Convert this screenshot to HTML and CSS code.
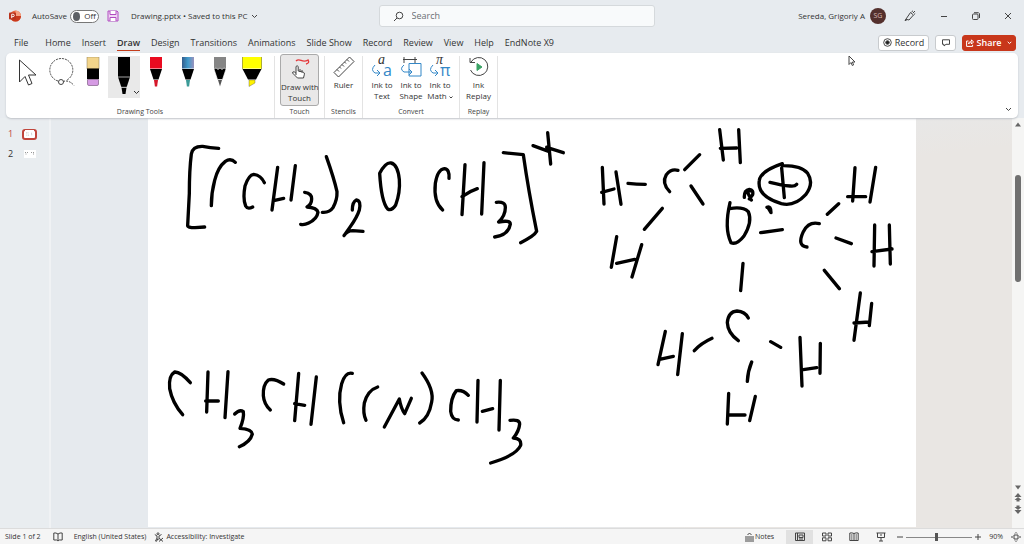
FILE: index.html
```html
<!DOCTYPE html>
<html lang="en">
<head>
  <meta charset="UTF-8">
  <meta name="viewport" content="width=device-width, initial-scale=1">
  <title>Drawing.pptx - PowerPoint</title>
  <link rel="stylesheet" href="styles.css">
</head>
<body>

  <!-- Title bar -->
  <header class="titlebar">
    <div class="title-left">
      <svg class="app-logo" width="12" height="12" viewBox="0 0 12 12">
        <circle cx="6.5" cy="6" r="5.5" fill="#e8663f"/>
        <path d="M6.5 .5a5.5 5.5 0 0 1 5.5 5.5H6.5z" fill="#f4a080"/>
        <path d="M1 6a5.5 5.5 0 0 0 11 0z" fill="#c9391c"/>
        <rect x="0" y="2.500" width="7" height="7" rx="1" fill="#b9311a"/>
        <path d="M2.700 8.200V4.200H4a1.200 1.200 0 0 1 0 2.500H2.700" fill="none" stroke="#fff" stroke-width=".9"/>
      </svg>
      <label class="autosave">AutoSave
        <span class="switch"><input type="checkbox"><span class="state">Off</span></span>
      </label>
      <button class="icon-btn save" aria-label="Save">
        <svg width="12" height="12" viewBox="0 0 12 12">
          <path d="M1 1h9l1 1v9H1z"/><path d="M3 1v3.500h6V1M3 11V7.500h6V11" fill="#fff"/>
        </svg>
      </button>
      <button class="doc-name">Drawing.pptx • Saved to this PC
        <svg width="7" height="5" viewBox="0 0 7 5"><path d="M1 1l2.500 2.500L6 1"/></svg>
      </button>
    </div>
    <label class="search">
      <svg width="11" height="11" viewBox="0 0 11 11"><circle cx="6.500" cy="4.500" r="3.300"/><path d="M4 7L1 10"/></svg>
      <input type="search" placeholder="Search" aria-label="Search">
    </label>
    <div class="title-right">
      <span class="user">Sereda, Grigoriy A</span>
      <span class="avatar">SG</span>
      <button class="icon-btn" aria-label="Coming soon">
        <svg width="12" height="12" viewBox="0 0 12 12"><path d="M1 10.500L6.500 2.500l3 2.500L5 10l-2-.5zM3 9.500l-2 1M7.500 2L9 .8M10 4.500l1.200-1M9 3l2-2"/></svg>
      </button>
      <button class="icon-btn" aria-label="Minimize">
        <svg width="8" height="8" viewBox="0 0 8 8"><path d="M1 4.500h6"/></svg>
      </button>
      <button class="icon-btn" aria-label="Restore">
        <svg width="8" height="8" viewBox="0 0 8 8"><rect x=".5" y="2" width="5.500" height="5.500" rx="1"/><path d="M2 .7h4.500l1 1V6"/></svg>
      </button>
      <button class="icon-btn" aria-label="Close">
        <svg width="8" height="8" viewBox="0 0 8 8"><path d="M1 1l6 6M7 1L1 7"/></svg>
      </button>
    </div>
  </header>

  <!-- Ribbon tabs -->
  <nav class="tabs">
    <a href="#" class="file">File</a>
    <a href="#">Home</a>
    <a href="#">Insert</a>
    <a href="#" class="active">Draw</a>
    <a href="#">Design</a>
    <a href="#">Transitions</a>
    <a href="#">Animations</a>
    <a href="#">Slide Show</a>
    <a href="#">Record</a>
    <a href="#">Review</a>
    <a href="#">View</a>
    <a href="#">Help</a>
    <a href="#">EndNote X9</a>
    <div class="tab-actions">
      <button class="record">
        <svg width="9" height="9" viewBox="0 0 9 9"><circle cx="4.500" cy="4.500" r="3.800" fill="none" stroke="#222" stroke-width=".8"/><circle cx="4.500" cy="4.500" r="1.800" fill="#222"/></svg>
        Record
      </button>
      <button class="comments" aria-label="Comments">
        <svg width="8" height="8" viewBox="0 0 8 8"><path d="M.5 .8h7v4.500H4L2 7V5.300H.5z"/></svg>
      </button>
      <button class="share">
        <svg width="8" height="8" viewBox="0 0 8 8"><path d="M2.500 2H.6v5.400h6V5.800M2.500 5c.3-2 1.500-2.700 3-2.700V.8l2 2.200-2 2V3.600c-1.500 0-2.300.4-3 1.400z"/></svg>
        Share
        <svg class="caret" width="5" height="4" viewBox="0 0 5 4"><path d="M.7 .8l1.800 1.800L4.300 .8"/></svg>
      </button>
    </div>
  </nav>

  <!-- Ribbon -->
  <section class="ribbon">
    <div class="group tools">
      <div class="group-body">
        <button class="tool" aria-label="Select">
          <svg width="20" height="30" viewBox="0 0 20 30"><path d="M1.500 3v22l5.500-5.500 3.500 8.500 3.500-1.500-3.500-8.500h7.500z"/></svg>
        </button>
        <button class="tool" aria-label="Lasso select">
          <svg width="30" height="30" viewBox="0 0 30 30"><path d="M15 24.500A11.500 11.500 0 1 1 21 23M17 24.500q6-2 11 4" stroke-dasharray="2 1"/><circle cx="15" cy="25" r="2.500" fill="#fff"/></svg>
        </button>
        <button class="tool" aria-label="Eraser">
          <svg width="20" height="40" viewBox="0 0 20 40"><path d="M4 0h12v12H4z" fill="#f3d58b" stroke="#8b7b54" stroke-width=".5"/><path d="M4 11.500h12V22H4z"/><path d="M4.500 22.500h11V27q0 1.500-1.500 1.500H6Q4.500 28.500 4.500 27z" fill="#d59ae3" stroke="#6d4b76" stroke-width=".6"/></svg>
        </button>
        <button class="tool selected" aria-label="Pen: Black">
          <svg width="20" height="40" viewBox="0 0 20 40"><path d="M4 0h12v20H4z"/><path d="M4 20h12l-3.300 10H7.300z"/><path d="M7.500 30.500h5l-1 6.500h-3z"/><path d="M4 20h12M7 30.300h6" stroke="#ccc" stroke-width=".8"/></svg>
          <svg class="more" width="7" height="5" viewBox="0 0 7 5"><path d="M1 1l2.500 2.500L6 1"/></svg>
        </button>
        <button class="tool" aria-label="Pen: Red">
          <svg width="20" height="40" viewBox="0 0 20 40"><path d="M4 0h12v11.500H4z" fill="#ea0b20"/><path d="M4 12h12l-3.500 10.500h-5z"/><path d="M8 23h4l-.9 6.500H8.900z" fill="#d5182b"/></svg>
        </button>
        <button class="tool" aria-label="Pen: Galaxy">
          <svg width="20" height="40" viewBox="0 0 20 40">
            <defs><linearGradient id="galaxy"><stop offset="0" stop-color="#335c8c"/><stop offset=".5" stop-color="#3f9acb"/><stop offset="1" stop-color="#9a93bd"/></linearGradient></defs>
            <path d="M4 0h12v11.500H4z" fill="url(#galaxy)"/><path d="M4 12h12l-3.500 10.500h-5z"/><path d="M8 23h4l-.9 6.500H8.900z" fill="#3c9b98"/>
          </svg>
        </button>
        <button class="tool" aria-label="Pencil">
          <svg width="20" height="40" viewBox="0 0 20 40"><path d="M4 0h12v13H4z" fill="#858585"/><path d="M4 12l2-1 2 1.500L10 11l2 1.500L14 11l2 1-3.500 10.500h-5z" stroke="#fff" stroke-width=".6"/><path d="M8 23h4l-2 6.500z" fill="#555"/></svg>
        </button>
        <button class="tool" aria-label="Highlighter">
          <svg width="20" height="40" viewBox="0 0 20 40"><path d="M.5 0h19v11.500H.5z" fill="#ff0"/><path d="M.5 12h19L14 22.500H6z"/><path d="M7 23h6v3l-6 3.500z" fill="#fff200" stroke="#555" stroke-width=".4"/><path d="M.5 0v12M19.500 0v12" stroke="#777600" stroke-width=".6"/></svg>
        </button>
      </div>
      <div class="group-label">Drawing Tools</div>
    </div>

    <div class="group touch">
      <div class="group-body">
        <button class="command pressed">
          <svg width="24" height="22" viewBox="0 0 24 22"><path d="M8 3c4-4 6 3 12-1q2 3-2 4" stroke="#e5383b" stroke-width="1.400"/><path d="M8 17V8.500q1.200-1.500 2.200 0V13l5 1.200q1.500.5 1.200 2L15.500 20h-6L4.500 15q0-1.500 1.700-1.200L8 15.200M12 11v3M14 12v2.500" fill="#fff"/></svg>
          Draw with<br>Touch
        </button>
      </div>
      <div class="group-label">Touch</div>
    </div>

    <div class="group stencils">
      <div class="group-body">
        <button class="command">
          <svg width="24" height="22" viewBox="0 0 24 22"><path d="M2 16.500L17.500 1l4.500 4.500L6.500 21zM5 13.500l2 2M7.500 11l1.500 1.500M10 8.500l2 2M12.500 6l1.500 1.500M15 3.500l2 2"/></svg>
          Ruler
        </button>
      </div>
      <div class="group-label">Stencils</div>
    </div>

    <div class="group convert">
      <div class="group-body">
        <button class="command">
          <svg width="24" height="22" viewBox="0 0 24 22"><text x="8" y="8" class="ink">a</text><path class="blue" d="M5 9q-5 5 0 8h5M7 14l3 3-3 3"/><text x="13" y="20" class="typed">a</text></svg>
          Ink to<br>Text
        </button>
        <button class="command">
          <svg width="24" height="22" viewBox="0 0 24 22"><path d="M4 3.500h14M5 1v6M16 1v6"/><path class="blue" d="M10 7.500h12V20H10zM5 9q-5 4 0 7h8M10 13l3 3-3 3"/></svg>
          Ink to<br>Shape
        </button>
        <button class="command">
          <svg width="24" height="22" viewBox="0 0 24 22"><text x="8" y="8" class="ink">π</text><path class="blue" d="M5 9q-5 5 0 8h5M7 14l3 3-3 3"/><text x="12" y="20" class="typed">π</text></svg>
          Ink to<br>Math <svg class="small-caret" width="4" height="3" viewBox="0 0 4 3"><path d="M.5 .5L2 2 3.500 .5"/></svg>
        </button>
      </div>
      <div class="group-label">Convert</div>
    </div>

    <div class="group replay">
      <div class="group-body">
        <button class="command">
          <svg width="24" height="22" viewBox="0 0 24 22"><path d="M4 6A9 9 0 1 1 3.500 14M3 2v4.500h5"/><path d="M10 7.500l5 3.500-5 3.500z" fill="#3aa365" stroke="#3aa365"/></svg>
          Ink<br>Replay
        </button>
      </div>
      <div class="group-label">Replay</div>
    </div>

    <button class="collapse" aria-label="Ribbon display options">
      <svg width="7" height="5" viewBox="0 0 7 5"><path d="M1 1l2.500 2.500L6 1"/></svg>
    </button>
    <svg class="pointer" width="8" height="12" viewBox="0 0 8 12"><path d="M1 1v8.500l2-2 1.300 3 1.300-.6-1.200-2.900H7z" fill="#fff"/></svg>
  </section>

  <!-- Thumbnails, slide, scroll bar -->
  <main class="workspace">
    <ol class="thumbs">
      <li class="current"><span>1</span><i class="thumb"><svg width="12" height="8" viewBox="0 0 12 8"><path d="M1.500 2.500h4M2 5.500h4M8 3h2M8.500 5h1.500"/></svg></i></li>
      <li><span>2</span><i class="thumb"><svg width="12" height="8" viewBox="0 0 12 8"><path d="M1 2.500h4M7 2.500h3M1.500 4h1M9 4h1"/></svg></i></li>
    </ol>
    <div class="stage">
      <!-- Pen strokes, grouped by where they were made on the slide -->
      <svg class="slide" viewBox="148 118 768 409" role="img" aria-label="Ink drawing of chemical formulas">
        <g transform="translate(160 120) scale(.33333)">
          <path d="M176 85Q150 83 128 79Q98 78 94 102Q88 150 88 220L83 316Q82 323 105 323L134 321"/>
          <path d="M226 127Q212 113 196 124Q174 141 164 181Q154 218 154 257"/>
          <path d="M313 188Q303 166 281 163Q266 165 255 198Q248 237 257 258Q263 269 278 261"/>
          <path d="M353 142L336 270M341 242L371 235M406 137L393 240"/>
          <path d="M434 217Q456 220 455 237Q455 253 441 261Q471 263 474 277Q471 298 446 309Q432 316 422 313"/>
          <path d="M499 110Q522 175 531 215Q532 240 519 263Q508 279 487 277"/>
          <path d="M577 270Q577 246 589 240Q604 242 598 270Q592 290 571 320L552 347Q560 333 578 332L609 334"/>
        </g>
        <g transform="translate(370 120) scale(.33333)">
          <path d="M29 160Q47 126 63 129Q83 133 88 178Q91 217 77 255Q65 274 53 267Q34 245 29 160"/>
          <path d="M237 175Q239 147 223 146Q203 148 196 190Q190 245 218 270"/>
          <path d="M285 134L276 284M276 230Q298 214 322 206M342 128L335 282"/>
          <path d="M379 247Q407 244 406 263Q406 286 386 306Q421 299 421 313Q416 345 374 351"/>
          <path d="M400 98L460 104Q475 210 500 334Q493 348 452 368"/>
          <path d="M533 38L542 132M489 77L536 94M530 82L580 98"/>
        </g>
        <g transform="translate(590 120) scale(.33333)">
          <path d="M389 29L400 120M391 85L440 84M446 29L451 128"/>
          <path d="M37 142L42 252M35 217L72 207M78 156L93 253"/>
          <path d="M114 190Q140 193 166 193M284 149L329 104M303 198L339 252M217 265L163 328"/>
          <path d="M264 151Q244 145 229 164Q214 190 239 215"/>
          <path d="M80 350L64 442M80 430L134 418M155 374L126 471"/>
          <path d="M420 248Q402 325 423 368Q440 376 462 348Q488 305 475 275Q458 259 419 266"/>
          <path d="M463 232Q462 211 478 208Q491 210 488 224L478 237M466 215L486 212M474 220L484 240M531 262Q543 257 543 278L536 266"/>
          <path d="M577 131Q512 153 508 181Q500 229 574 251Q613 261 647 224Q673 190 653 160Q634 136 577 137M575 144L583 233M540 187Q575 196 600 198Q614 200 620 193"/>
          <path d="M512 338L577 329M712 283L746 251M738 354L784 371M703 451L748 506M459 430L452 512"/>
          <path d="M688 311Q656 303 640 335Q620 378 651 381"/>
          <path d="M795 143L788 243M773 230L827 230M857 142L840 246"/>
          <path d="M854 315L852 438M846 395L906 387M898 315L901 432"/>
        </g>
        <g transform="translate(640 250) scale(.33333)">
          <path d="M325 204Q315 184 291 183Q265 185 262 218Q263 249 295 272"/>
          <path d="M76 244L54 344M59 328L100 319M127 251L113 374"/>
          <path d="M163 302Q183 280 216 265M392 275L422 292M335 336Q323 365 322 394"/>
          <path d="M480 262L486 408M490 359L530 353M541 280L540 370"/>
          <path d="M266 430L262 522M266 495L315 495M346 439L329 512"/>
          <path d="M661 129L642 271M642 219L688 216M695 160L688 227"/>
        </g>
        <g transform="translate(150 350) scale(.33333)">
          <path d="M121 98Q92 65 74 66Q55 77 59 116Q67 159 98 194"/>
          <path d="M174 66L170 186M167 153L205 153M234 65L225 203"/>
          <path d="M254 192Q269 177 280 185Q283 203 270 235Q306 238 307 252Q301 276 268 290"/>
          <path d="M401 102Q373 84 355 90Q338 105 340 137Q342 163 361 180"/>
          <path d="M446 70L434 212M434 161L464 166M499 81L483 223"/>
          <path d="M607 70Q586 65 575 101Q560 155 581 218"/>
          <path d="M683 111Q653 121 643 159Q638 190 648 211M703 231L748 147Q753 175 764 191L784 145"/>
          <path d="M816 69Q853 119 845 156Q837 203 809 219"/>
          <path d="M955 136Q939 119 919 122Q902 143 902 184Q905 209 925 210"/>
          <path d="M984 91L981 216M997 184L1028 176M1051 91L1047 240"/>
          <path d="M1080 211Q1109 207 1109 222Q1107 244 1090 264Q1115 265 1112 286Q1098 317 1022 339"/>
        </g>
      </svg>
    </div>
    <div class="scrollbar">
      <svg width="6" height="5" viewBox="0 0 6 5"><path d="M3 .5L6 4.500H0z"/></svg>
      <div class="track"><div class="thumb-bar"></div></div>
      <svg width="6" height="5" viewBox="0 0 6 5"><path d="M3 4.500L6 .5H0z"/></svg>
      <svg width="8" height="9" viewBox="0 0 8 9"><path d="M4 0l3.500 4h-7zM4 4l3.500 3h-7zM2.500 7h3v1.500h-3z"/></svg>
      <svg width="8" height="9" viewBox="0 0 8 9"><path d="M4 9L.5 5h7zM4 5L.5 2h7zM2.500 .5h3V2h-3z"/></svg>
    </div>
  </main>

  <!-- Status bar -->
  <footer class="status">
    <span class="slide-count">Slide 1 of 2</span>
    <svg width="10" height="10" viewBox="0 0 10 10"><path d="M5 2Q3 .5 .8 1v7h3L5 9l1.200-1h3V1Q7 .5 5 2zM5 2v6"/></svg>
    <button class="language">English (United States)</button>
    <button class="access">
      <svg width="10" height="10" viewBox="0 0 10 10"><circle cx="4" cy="1.800" r="1"/><path d="M.8 2.500L3 4v2L1.500 9l1 .3L4 6.500l1 1.300M7.500 2.500L5 4v2M5 6l4 3.500M9 6L5 9.500"/></svg>
      Accessibility: Investigate
    </button>
    <div class="view-controls">
      <button class="notes"><svg width="11" height="10" viewBox="0 0 11 10"><path d="M3.500 3l2-2 2 2M1 5h9M1 7h9M1 9h9"/></svg>Notes</button>
      <button class="view on" aria-label="Normal"><svg width="10" height="10" viewBox="0 0 10 10"><path d="M.5 1h9v7.500h-9zM2.500 1v7.500M4 3h4v2.500H4zM4 7h4"/></svg></button>
      <button class="view" aria-label="Slide sorter"><svg width="10" height="10" viewBox="0 0 10 10"><path d="M.5 1h3.500v3H.5zM6 1h3.500v3H6zM.5 5.800h3.500v3H.5zM6 5.800h3.500v3H6z"/></svg></button>
      <button class="view" aria-label="Reading view"><svg width="10" height="10" viewBox="0 0 10 10"><path d="M5 1.500Q3 .5 .8 1v7.500h8.400V1Q7 .5 5 1.500zM5 1.500v7M2 3h1.500M2 5h1.500M6.500 3H8M6.500 5H8M2 7h1.500M6.500 7H8"/></svg></button>
      <button class="view" aria-label="Slide show"><svg width="10" height="10" viewBox="0 0 10 10"><path d="M.5 1h9M1.500 1v4.500h7V1M5 5.500V9M3 9h4M4 3h2"/></svg></button>
      <button class="zoom-step" aria-label="Zoom out"><svg width="6" height="6" viewBox="0 0 6 6"><path d="M0 3h6"/></svg></button>
      <input type="range" min="0" max="100" value="45" aria-label="Zoom">
      <button class="zoom-step" aria-label="Zoom in"><svg width="6" height="6" viewBox="0 0 6 6"><path d="M0 3h6M3 0v6"/></svg></button>
      <button class="percent">90%</button>
      <button class="fit" aria-label="Fit slide to window"><svg width="10" height="10" viewBox="0 0 10 10"><path d="M3 3h4v4H3zM4 1.500l1-1 1 1M4 8.500l1 1 1-1M1.500 4l-1 1 1 1M8.500 4l1 1-1 1"/></svg></button>
    </div>
  </footer>

</body>
</html>
```
FILE: styles.css
```css
* { margin:0; padding:0; box-sizing:border-box; }
body {
  display:flex;
  flex-direction:column;
  height:100vh;
  overflow:hidden;
  background:#e7ebef;
  color:#333;
  font:8px/12px "Open Sans","Noto Sans",sans-serif;
}
button, input { font:inherit; color:inherit; background:none; border:none; }
a { color:inherit; text-decoration:none; }
svg { flex:none; fill:none; stroke:#444; stroke-width:1; }

/* Title bar */
.titlebar {
  display:grid;
  grid-template-columns:1fr 276px 1fr;
  align-items:center;
  height:32px;
  padding:0 12px 0 9px;
}
.title-left, .title-right { display:flex; align-items:center; }
.app-logo { stroke:none; margin-right:11px; }
.autosave { display:flex; align-items:center; gap:3px; }
.switch {
  display:flex;
  align-items:center;
  width:29px;
  height:13px;
  padding:0 2px;
  gap:4px;
  border:1px solid #777;
  border-radius:7px;
  background:#fff;
}
.switch input { appearance:none; width:9px; height:9px; border-radius:50%; background:#5d6065; }
.icon-btn { display:flex; }
.save { margin:0 12px 0 8px; }
.save svg { fill:#f0d6f4; stroke:#b04cc0; }
.doc-name { display:flex; align-items:center; gap:3px; white-space:nowrap; }
.search {
  display:flex;
  align-items:center;
  gap:8px;
  height:22px;
  margin-left:6px;
  margin-right:-6px;
  padding:0 13px;
  border:1px solid #d5d9dc;
  border-radius:3px;
  background:#f8fafb;
}
.search input { flex:1; min-width:0; font-size:9px; outline:none; }
.search input::placeholder { color:#6b6f73; }
.title-right { justify-content:flex-end; gap:24px; }
.avatar {
  width:16px;
  height:16px;
  margin:0 -6px 0 -19px;
  border-radius:50%;
  background:#54302d;
  color:#d9b9b4;
  font-size:7px;
  line-height:16px;
  text-align:center;
}

/* Tabs */
.tabs {
  display:flex;
  align-items:center;
  gap:11px;
  height:21px;
  padding:0 8px 0 14px;
  font-size:9px;
  white-space:nowrap;
}
.tabs a { padding-top:1px; line-height:14px; border-bottom:1px solid transparent; }
.tabs .file { margin-right:6px; }
.tabs .active { font-weight:600; border-color:#c43e1c; }
.tab-actions { display:flex; gap:6px; margin-left:auto; }
.tab-actions button {
  display:flex;
  align-items:center;
  justify-content:center;
  gap:3px;
  height:16px;
  border:1px solid #c8cbce;
  border-radius:3px;
  background:#fff;
}
.tab-actions .record { width:51px; }
.tab-actions .comments { width:21px; }
.tab-actions .share { width:54px; border-color:#c8371b; background:#c8371b; color:#fff; font-weight:600; }
.share svg { stroke:#fff; }
.share .caret { margin-left:3px; }

/* Ribbon */
.ribbon {
  position:relative;
  z-index:1;
  display:flex;
  flex:none;
  height:65px;
  margin:0 6px;
  padding:3px 0 0;
  border-radius:5px;
  background:#fff;
  box-shadow:0 1px 2px #bfc3c8;
}
.group { display:flex; flex-direction:column; border-right:1px solid #e3e3e3; }
.group-body { display:flex; flex:1; align-items:flex-start; justify-content:center; }
.group-label { height:11px; font-size:7px; line-height:10px; text-align:center; color:#444; }
.tools { width:269px; }
.touch { width:50px; }
.stencils { width:38px; }
.convert { width:97px; }
.replay { width:38px; }
.tools .group-body { justify-content:flex-start; padding-left:6px; }
.tool { display:flex; justify-content:center; width:32px; height:42px; padding-top:1px; }
.tool:first-child svg { stroke:#333; }
.tool:nth-child(2) { width:34px; }
.tool:nth-child(3) { width:30px; }
.tool:nth-child(n+3) svg { stroke:none; fill:#000; }
.tool.selected { background:#e9e9e9; }
.tool.selected svg:first-child { margin-left:6px; }
.tool.selected .more { align-self:flex-end; margin:0 0 3px -1px; fill:none; stroke:#333; }
.command { display:flow-root; width:29px; line-height:11px; white-space:nowrap; }
.command > svg:first-child { display:block; margin:0 auto 1px; overflow:visible; }
.command.pressed {
  width:39px;
  height:52px;
  margin-top:-2px;
  padding-top:1px;
  border:1px solid #aaa;
  border-radius:3px;
  background:#e9e8e8;
}
.ink { font:italic 14px "Liberation Serif",serif; fill:#333; stroke:none; }
.typed { font:16px "Open Sans",sans-serif; fill:#3387c7; stroke:none; }
.blue { stroke:#3387c7; }
.collapse { margin:auto 6px 6px auto; display:flex; }
.pointer { position:absolute; right:162px; top:2px; }

/* Workspace */
.workspace {
  display:grid;
  grid-template-columns:51px 1fr 12px;
  flex:1;
  min-height:0;
  background:radial-gradient(ellipse 50% 90% at 100% 70%, #e9e6e3 70%, #e6eaee);
}
.thumbs { padding-top:6px; list-style:none; border-right:2px solid #f0f2f4; background:#e9edf0; }
.thumbs li { display:flex; align-items:center; gap:9px; height:20px; padding-left:8px; font-size:9px; }
.thumbs .current { color:#c0473f; }
.thumb { display:flex; align-items:center; justify-content:center; width:15px; height:11px; border-radius:3px; }
.thumb svg { background:#fff; stroke:#999; stroke-dasharray:1 1; }
.current .thumb { border:2px solid #c0453b; background:#fff; }
.current .thumb svg { width:9px; }
.stage { min-width:0; padding:0 96px 0 97px; overflow:hidden; }
.slide { display:block; width:100%; background:#fff; }
.slide path { stroke:#000; stroke-width:10; stroke-linecap:round; stroke-linejoin:round; }
.scrollbar { display:flex; flex-direction:column; align-items:center; gap:3px; padding:4px 0 14px; background:#f5f5f4; }
.scrollbar svg { fill:#666; stroke:none; }
.track { flex:1; width:6px; padding-top:45px; }
.thumb-bar { height:35%; border-radius:3px; background:#707070; }

/* Status bar */
.status {
  display:flex;
  align-items:center;
  height:16px;
  padding:1px 3px 0 5px;
  border-top:1px solid #dcdcdc;
  background:#f5f5f5;
  font-size:7px;
  white-space:nowrap;
}
.status button { display:flex; align-items:center; gap:2px; height:15px; }
.slide-count { margin-right:12px; }
.language { margin-left:11px; }
.access { margin-left:8px; }
.view-controls { display:flex; align-items:center; margin-left:auto; }
.status .notes { gap:0; margin-right:12px; }
.status .view { justify-content:center; width:27px; }
.view.on { background:#e1e1e1; }
.zoom-step { margin:0 3px; }
.view-controls input { appearance:none; width:66px; height:10px; background:linear-gradient(#888,#888) center/100% 1px no-repeat; }
.view-controls input::-webkit-slider-thumb { appearance:none; width:3px; height:8px; background:#555; }
.percent { margin:0 8px 0 5px; }
```
